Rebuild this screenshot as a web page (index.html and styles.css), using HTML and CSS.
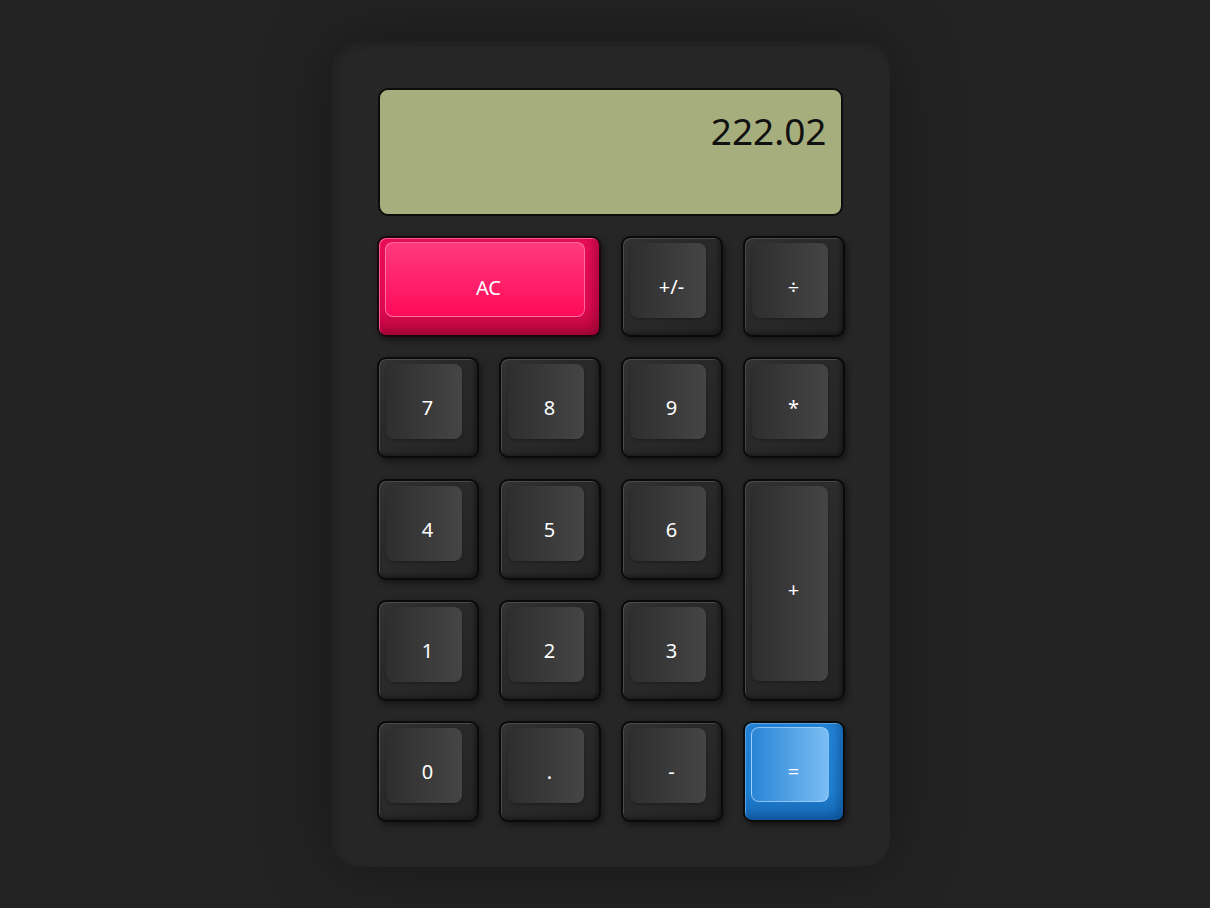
FILE: index.html
```html
<!DOCTYPE html>
<html lang="en">
<head>
    <meta charset="UTF-8">
    <meta name="viewport" content="width=device-width, initial-scale=1.0">
    <title>Calculator</title>
    <link rel="stylesheet" href="styles.css">
</head>
<body>
    <div class="calculator">
        <div class="display">
            <span id="result">222.02</span>
        </div>
        <div class="keys">
            <button class="key key-clear"><span class="face"></span><span class="label">AC</span></button>
            <button class="key"><span class="face"></span><span class="label">+/-</span></button>
            <button class="key"><span class="face"></span><span class="label">&divide;</span></button>

            <button class="key"><span class="face"></span><span class="label">7</span></button>
            <button class="key"><span class="face"></span><span class="label">8</span></button>
            <button class="key"><span class="face"></span><span class="label">9</span></button>
            <button class="key"><span class="face"></span><span class="label">*</span></button>

            <button class="key"><span class="face"></span><span class="label">4</span></button>
            <button class="key"><span class="face"></span><span class="label">5</span></button>
            <button class="key"><span class="face"></span><span class="label">6</span></button>
            <button class="key key-plus"><span class="face"></span><span class="label">+</span></button>

            <button class="key"><span class="face"></span><span class="label">1</span></button>
            <button class="key"><span class="face"></span><span class="label">2</span></button>
            <button class="key"><span class="face"></span><span class="label">3</span></button>

            <button class="key"><span class="face"></span><span class="label">0</span></button>
            <button class="key"><span class="face"></span><span class="label">.</span></button>
            <button class="key"><span class="face"></span><span class="label">-</span></button>
            <button class="key key-equals"><span class="face"></span><span class="label">=</span></button>
        </div>
    </div>
</body>
</html>
```

FILE: styles.css
```css
body {
    margin: 0;
    padding: 0 0 0 10px;
    min-height: 908px;
    background: #232323;
    font-family: 'Noto Sans', 'Open Sans', sans-serif;
    display: flex;
    justify-content: center;
    align-items: center;
}

.calculator {
    width: 468px;
    padding: 47px 45px 45px 46px;
    background: #262626;
    border-radius: 28px;
    box-shadow: 0 0 70px rgba(0, 0, 0, 0.35),
                inset 3px 3px 8px rgba(0, 0, 0, 0.18);
}

.display {
    height: 124px;
    margin: 0 2px 20px 1px;
    background: #a6ae7d;
    border: 2px solid #0c0c0c;
    border-radius: 10px;
    text-align: right;
    padding: 0 14px 0 0;
}

.display span {
    display: block;
    font-size: 37px;
    line-height: 1;
    padding-top: 22px;
    color: #111;
}

.keys {
    display: grid;
    grid-template-columns: repeat(4, 102px);
    grid-auto-rows: 101px;
    gap: 20.25px 20px;
}

.key {
    position: relative;
    padding: 0;
    border: 2px solid #0a0a0a;
    border-radius: 9px;
    background: linear-gradient(135deg, #333 0%, #2a2a2a 40%, #232323 100%);
    box-shadow: inset 1px 1px 0 #4a4a4a,
                inset -2px -2px 4px rgba(0, 0, 0, 0.35),
                2px 3px 6px rgba(0, 0, 0, 0.45);
    color: #fff;
    font-family: inherit;
    font-size: 20px;
    cursor: pointer;
}

.key .face {
    position: absolute;
    top: 5px;
    left: 7px;
    right: 15px;
    bottom: 17px;
    border-radius: 8px;
    background: linear-gradient(to right, #2e2e2e, #454545);
    box-shadow: 0 1px 3px rgba(0, 0, 0, 0.3);
}

.key .label {
    position: relative;
}

.key-clear {
    grid-column: span 2;
    border-color: #1a0a0f;
    background: linear-gradient(to bottom, #e90d58 0%, #e00a52 70%, #b8063f 100%);
    box-shadow: inset 1px 1px 0 #ff5a8f,
                inset -6px -4px 8px rgba(120, 0, 40, 0.45),
                2px 3px 6px rgba(0, 0, 0, 0.45);
}

.key-clear .face {
    left: 6px;
    right: 14px;
    top: 4px;
    bottom: 18px;
    background: linear-gradient(to bottom, #ff3a7d, #ff0b5b);
    border: 1px solid rgba(255, 140, 180, 0.7);
    box-shadow: none;
}

.key-clear .label {
    top: 1px;
}

.key-plus {
    grid-row: span 2;
}

.key-plus .face {
    bottom: 18px;
}

.key-equals {
    border-color: #0b0b0b;
    background: linear-gradient(to bottom, #2482d4 0%, #1f7fd0 70%, #1668b4 100%);
    box-shadow: inset 1px 1px 0 #56a4e6,
                inset -5px -4px 8px rgba(0, 50, 110, 0.4),
                2px 3px 6px rgba(0, 0, 0, 0.45);
}

.key-equals .face {
    top: 4px;
    left: 6px;
    right: 14px;
    bottom: 18px;
    background: linear-gradient(to right, #2a85d6, #7bbdf3);
    border: 1px solid rgba(170, 215, 255, 0.7);
    box-shadow: none;
}
```
